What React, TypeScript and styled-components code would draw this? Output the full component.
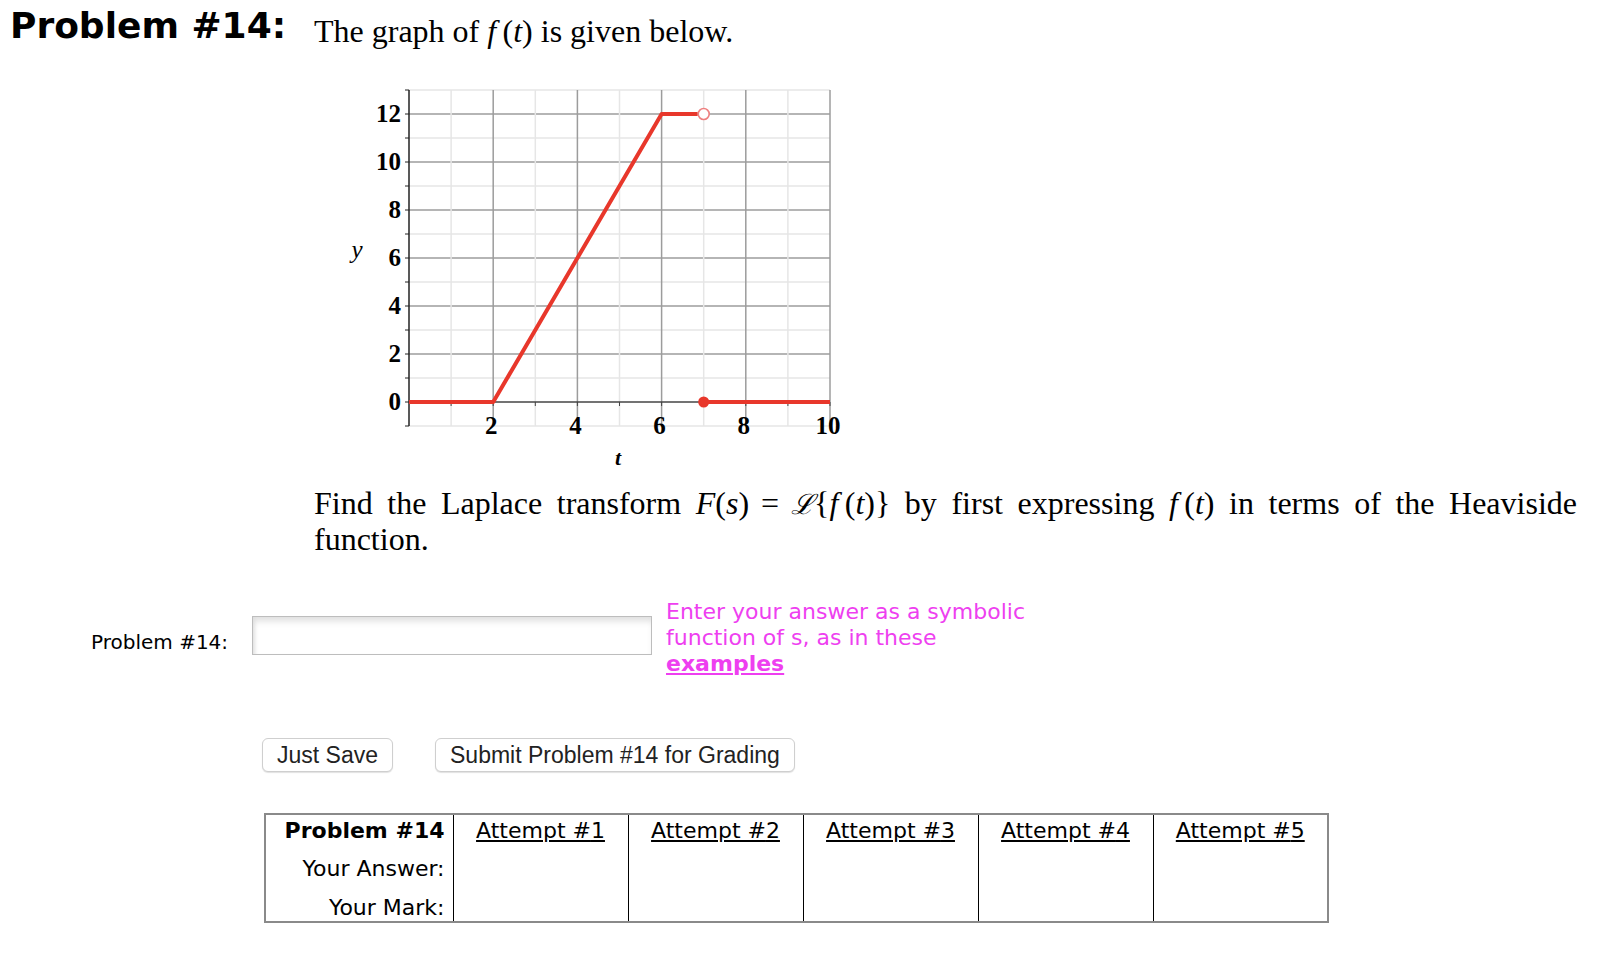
import React from 'react';
import styled, { createGlobalStyle } from 'styled-components';

const GlobalStyle = createGlobalStyle`
  html, body {
    margin: 0;
    padding: 0;
    background: #ffffff;
  }
  body {
    font-family: "DejaVu Sans", Verdana, sans-serif;
    color: #000;
  }
`;

const Page = styled.div`
  width: 1604px;
  height: 972px;
  overflow: hidden;
`;

const HeaderRow = styled.div`
  display: flex;
  align-items: flex-start;
  height: 50px;
  padding-top: 5px;
  box-sizing: border-box;
`;

const Heading = styled.h1`
  flex: 0 0 314px;
  margin: 0;
  padding-left: 10px;
  box-sizing: border-box;
  font-family: "DejaVu Sans", Verdana, sans-serif;
  font-weight: bold;
  font-size: 36px;
  line-height: 42px;
`;

const SerifText = styled.div`
  margin-top: 8px;
  font-family: "Liberation Serif", "Times New Roman", serif;
  font-size: 32px;
  line-height: 36px;
`;

const Body = styled.div`
  margin-left: 314px;
`;

const GraphSvg = styled.svg`
  display: block;
  margin-top: 32px;
  margin-left: 21px;
`;

const Paragraph = styled.p`
  margin: 14px 0 0 0;
  width: 1263px;
  font-family: "Liberation Serif", "Times New Roman", serif;
  font-size: 32px;
  line-height: 35px;
  text-align: justify;
`;

const Script = styled.span`
  font-family: "DejaVu Serif", "Liberation Serif", serif;
  font-style: italic;
  font-size: 28px;
`;

const Eq = styled.span`
  margin: 0 12px;
`;

const AnswerRow = styled.div`
  display: flex;
  align-items: flex-start;
  margin-top: 42px;
  padding-left: 91px;
`;

const Label = styled.label`
  flex: 0 0 161px;
  margin-top: 31px;
  font-size: 20px;
  line-height: 24px;
`;

const AnswerInput = styled.input`
  flex: 0 0 auto;
  width: 400px;
  height: 39px;
  margin-top: 17px;
  box-sizing: border-box;
  border: 1px solid #bdbdbd;
  background: #fff;
  box-shadow: inset 0 7px 7px -3px #dedede, inset 5px 0 5px -4px #d8d8d8;
  outline: none;
`;

const Hint = styled.div`
  margin-left: 14px;
  font-size: 22px;
  line-height: 26px;
  color: #ee3ff0;
`;

const HintLink = styled.a`
  color: #ee3ff0;
  font-weight: bold;
  text-decoration: underline;
`;

const ButtonRow = styled.div`
  display: flex;
  gap: 42px;
  margin-top: 61px;
  padding-left: 262px;
`;

const Button = styled.button`
  height: 34px;
  padding: 0 14px;
  border: 1px solid #cfcfcf;
  border-radius: 6px;
  background: #fff;
  box-shadow: 0 1px 1px rgba(0, 0, 0, 0.12);
  font-family: "Liberation Sans", Arial, sans-serif;
  font-size: 23px;
  color: #222;
`;

const Results = styled.table`
  margin: 41px 0 0 264px;
  border-collapse: collapse;
  border: 2px solid #8a8a8a;
  font-size: 22px;
`;

const Row = styled.tr<{ $h: number; $pt: number }>`
  & > td {
    height: ${(p) => p.$h}px;
    padding-top: ${(p) => p.$pt}px;
  }
`;

const Cell = styled.td<{ $align?: string; $w?: number; $bold?: boolean }>`
  width: ${(p) => (p.$w ? `${p.$w}px` : 'auto')};
  box-sizing: border-box;
  padding: 0 8px;
  line-height: 27px;
  text-align: ${(p) => p.$align || 'center'};
  font-weight: ${(p) => (p.$bold ? 'bold' : 'normal')};
  border-right: 1.5px solid #000;
  vertical-align: top;
  &:last-child {
    border-right: none;
  }
`;

const AttemptLink = styled.a`
  color: #000;
  text-decoration: underline;
`;

const X0 = 74;
const Y0 = 320;
const UX = 42.1;
const UY = 24;
const px = (t: number) => X0 + t * UX;
const py = (y: number) => Y0 - y * UY;
const RED = '#e8372b';

const Graph = () => {
  const verticals = [1, 2, 3, 4, 5, 6, 7, 8, 9, 10];
  const horizontals = [-1, 1, 2, 3, 4, 5, 6, 7, 8, 9, 10, 11, 12, 13];
  const ticks = [-1, 0, 1, 2, 3, 4, 5, 6, 7, 8, 9, 10, 11, 12, 13];
  return (
    <GraphSvg width={520} height={390} viewBox="0 0 520 390">
      {horizontals.map((y) => (
        <line
          key={`h${y}`}
          x1={px(0)}
          x2={px(10)}
          y1={py(y)}
          y2={py(y)}
          stroke={Math.abs(y) % 2 === 1 ? '#e6e6e6' : '#9c9c9c'}
          strokeWidth={1.5}
        />
      ))}
      {verticals.map((t) => (
        <line
          key={`v${t}`}
          x1={px(t)}
          x2={px(t)}
          y1={py(13)}
          y2={py(-1)}
          stroke={t % 2 === 1 ? '#e6e6e6' : '#9c9c9c'}
          strokeWidth={1.5}
        />
      ))}
      <line x1={px(0)} x2={px(10)} y1={py(0)} y2={py(0)} stroke="#444" strokeWidth={1.5} />
      <line x1={px(0)} x2={px(0)} y1={py(13)} y2={py(-1)} stroke="#222" strokeWidth={1.5} />
      {ticks.map((y) => (
        <line key={`ty${y}`} x1={px(0) - 4} x2={px(0)} y1={py(y)} y2={py(y)} stroke="#222" strokeWidth={1} />
      ))}
      {verticals.map((t) => (
        <line key={`tx${t}`} x1={px(t)} x2={px(t)} y1={py(0)} y2={py(0) + 4} stroke="#444" strokeWidth={1} />
      ))}
      <g fontFamily='"Liberation Serif", "Times New Roman", serif' fontWeight="bold" fontSize={25} fill="#000">
        {[0, 2, 4, 6, 8, 10, 12].map((y) => (
          <text key={`ly${y}`} x={px(0) - 8} y={py(y) + 8} textAnchor="end">
            {y}
          </text>
        ))}
        {[2, 4, 6, 8, 10].map((t) => (
          <text key={`lx${t}`} x={px(t) - 2} y={py(-1) + 8} textAnchor="middle">
            {t}
          </text>
        ))}
      </g>
      <text
        x={22}
        y={176}
        fontFamily='"Liberation Serif", "Times New Roman", serif'
        fontStyle="italic"
        fontSize={25}
        textAnchor="middle"
      >
        y
      </text>
      <text
        x={283}
        y={383}
        fontFamily='"Liberation Serif", "Times New Roman", serif'
        fontStyle="italic"
        fontWeight="bold"
        fontSize={22}
        textAnchor="middle"
      >
        t
      </text>
      <polyline
        points={`${px(0)},${py(0)} ${px(2)},${py(0)} ${px(6)},${py(12)} ${px(7) - 6},${py(12)}`}
        fill="none"
        stroke={RED}
        strokeWidth={4}
        strokeLinejoin="round"
      />
      <line x1={px(7)} x2={px(10)} y1={py(0)} y2={py(0)} stroke={RED} strokeWidth={4} />
      <circle cx={px(7)} cy={py(12)} r={5.5} fill="#fff" stroke="#ee8080" strokeWidth={1.6} />
      <circle cx={px(7)} cy={py(0)} r={5.5} fill={RED} />
    </GraphSvg>
  );
};

const attempts = [1, 2, 3, 4, 5];

export default function App() {
  return (
    <Page>
      <GlobalStyle />
      <HeaderRow>
        <Heading>Problem #14:</Heading>
        <SerifText>
          The graph of <i>f</i>&thinsp;(<i>t</i>) is given below.
        </SerifText>
      </HeaderRow>
      <Body>
        <Graph />
        <Paragraph>
          Find the Laplace transform <i>F</i>(<i>s</i>)<Eq>=</Eq>
          <Script>ℒ</Script>{'{'}<i>f</i>&thinsp;(<i>t</i>){'}'} by first expressing <i>f</i>&thinsp;(<i>t</i>) in
          terms of the Heaviside function.
        </Paragraph>
      </Body>
      <AnswerRow>
        <Label htmlFor="answer">Problem #14:</Label>
        <AnswerInput id="answer" type="text" />
        <Hint>
          Enter your answer as a symbolic
          <br />
          function of s, as in these
          <br />
          <HintLink href="#">examples</HintLink>
        </Hint>
      </AnswerRow>
      <ButtonRow>
        <Button>Just Save</Button>
        <Button>Submit Problem #14 for Grading</Button>
      </ButtonRow>
      <Results>
        <tbody>
          <Row $h={35} $pt={2}>
            <Cell $align="right" $w={188} $bold>
              Problem #14
            </Cell>
            {attempts.map((n) => (
              <Cell key={n} $w={175}>
                <AttemptLink href="#">Attempt #{n}</AttemptLink>
              </Cell>
            ))}
          </Row>
          <Row $h={39} $pt={6}>
            <Cell $align="right">Your Answer:</Cell>
            {attempts.map((n) => (
              <Cell key={n} />
            ))}
          </Row>
          <Row $h={32} $pt={6}>
            <Cell $align="right">Your Mark:</Cell>
            {attempts.map((n) => (
              <Cell key={n} />
            ))}
          </Row>
        </tbody>
      </Results>
    </Page>
  );
}
